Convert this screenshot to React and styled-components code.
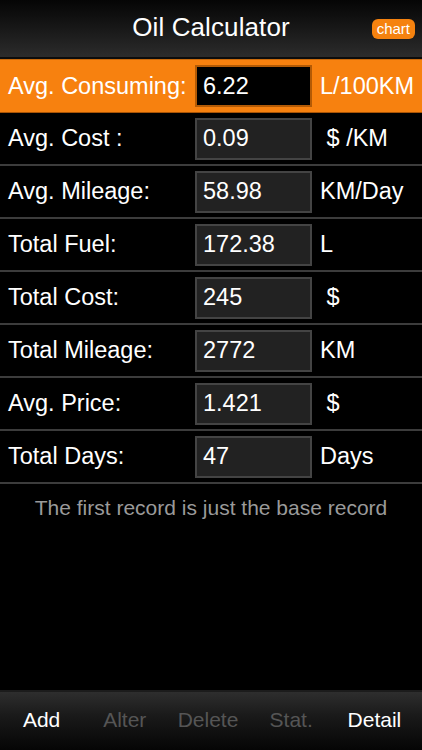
import React from 'react';
import styled, { createGlobalStyle } from 'styled-components';

const GlobalStyle = createGlobalStyle`
  html, body {
    margin: 0;
    padding: 0;
    background: #000;
  }
  body {
    font-family: "Liberation Sans", Arial, Helvetica, sans-serif;
    color: #fff;
  }
`;

const Screen = styled.div`
  width: 422px;
  height: 750px;
  display: flex;
  flex-direction: column;
  background: #000;
  overflow: hidden;
`;

const Header = styled.div`
  height: 59px;
  box-sizing: border-box;
  display: grid;
  grid-template-columns: 1fr auto 1fr;
  align-items: center;
  background: linear-gradient(to bottom, #050505 0%, #161616 45%, #2c2c2c 100%);
  border-bottom: 2px solid #0c0c0c;
  padding-bottom: 3px;
`;

const Title = styled.div`
  grid-column: 2;
  font-size: 26px;
  color: #fff;
  letter-spacing: 0.1px;
`;

const ChartButton = styled.div`
  grid-column: 3;
  justify-self: end;
  margin-right: 7px;
  margin-top: 3px;
  height: 20px;
  padding: 0 5px;
  border-radius: 6px;
  background: #f5820f;
  color: #fff;
  font-size: 15px;
  line-height: 20px;
`;

const List = styled.div`
  display: flex;
  flex-direction: column;
`;

const Row = styled.div`
  height: ${(p) => (p.$active ? '54px' : '53px')};
  box-sizing: border-box;
  display: grid;
  grid-template-columns: 179px 117px 1fr;
  column-gap: 8px;
  align-items: center;
  padding-left: 8px;
  background: ${(p) => (p.$active ? '#f7810f' : '#000')};
  border-top: ${(p) => (p.$active ? '1px solid #c86a0c' : 'none')};
  border-bottom: ${(p) => (p.$active ? '1px solid #a85406' : '2px solid #3c3c3c')};
  font-size: 23.5px;
`;

const Label = styled.div`
  color: #fff;
  white-space: nowrap;
`;

const ValueBox = styled.div`
  height: 42px;
  box-sizing: border-box;
  display: flex;
  align-items: center;
  padding-left: 6px;
  background: ${(p) => (p.$active ? '#000' : '#222')};
  border: ${(p) => (p.$active ? '2px solid #b35a05' : '2px solid #444')};
  color: #fff;
`;

const Unit = styled.div`
  color: #fff;
  white-space: pre;
`;

const Note = styled.div`
  margin-top: 12px;
  text-align: center;
  color: #9a9a9a;
  font-size: 21px;
`;

const Spacer = styled.div`
  flex: 1;
`;

const Toolbar = styled.div`
  height: 60px;
  box-sizing: border-box;
  display: grid;
  grid-template-columns: repeat(5, 1fr);
  align-items: center;
  padding: 0 6px 0 0;
  border-top: 2px solid #1c1c1c;
  background: linear-gradient(to bottom, #2e2e2e 0%, #1a1a1a 40%, #050505 100%);
`;

const ToolButton = styled.div`
  text-align: center;
  font-size: 21px;
  color: ${(p) => (p.$disabled ? '#555' : '#fff')};
  padding-bottom: 2px;
`;

const rows = [
  { label: 'Avg. Consuming:', value: '6.22', unit: 'L/100KM', active: true },
  { label: 'Avg. Cost :', value: '0.09', unit: ' $ /KM' },
  { label: 'Avg. Mileage:', value: '58.98', unit: 'KM/Day' },
  { label: 'Total Fuel:', value: '172.38', unit: 'L' },
  { label: 'Total Cost:', value: '245', unit: ' $' },
  { label: 'Total Mileage:', value: '2772', unit: 'KM' },
  { label: 'Avg. Price:', value: '1.421', unit: ' $' },
  { label: 'Total Days:', value: '47', unit: 'Days' },
];

const tools = [
  { name: 'Add' },
  { name: 'Alter', disabled: true },
  { name: 'Delete', disabled: true },
  { name: 'Stat.', disabled: true },
  { name: 'Detail' },
];

const App = () => {
  return (
    <Screen>
      <GlobalStyle />
      <Header>
        <Title>Oil Calculator</Title>
        <ChartButton>chart</ChartButton>
      </Header>
      <List>
        {rows.map((r) => (
          <Row key={r.label} $active={r.active}>
            <Label>{r.label}</Label>
            <ValueBox $active={r.active}>{r.value}</ValueBox>
            <Unit>{r.unit}</Unit>
          </Row>
        ))}
      </List>
      <Note>The first record is just the base record</Note>
      <Spacer />
      <Toolbar>
        {tools.map((t) => (
          <ToolButton key={t.name} $disabled={t.disabled}>
            {t.name}
          </ToolButton>
        ))}
      </Toolbar>
    </Screen>
  );
};

export default App;
